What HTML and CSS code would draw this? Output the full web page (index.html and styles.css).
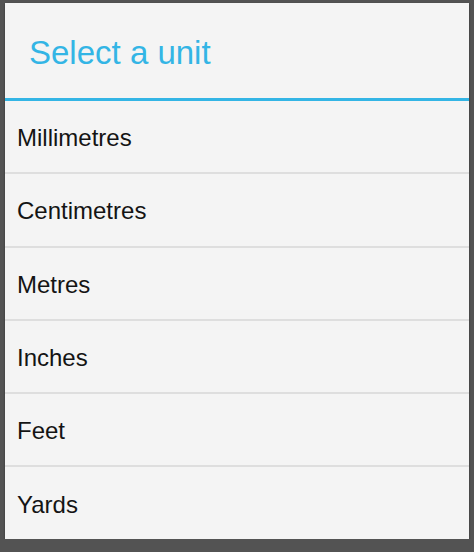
FILE: index.html
```html
<!DOCTYPE html>
<html>
<head>
    <link rel="stylesheet" href="styles.css">
</head>
<body>
    <div class="dialog">
        <div class="dialog-title">Select a unit</div>
        <ul class="unit-list">
            <li class="unit">Millimetres</li>
            <li class="unit">Centimetres</li>
            <li class="unit">Metres</li>
            <li class="unit">Inches</li>
            <li class="unit">Feet</li>
            <li class="unit">Yards</li>
        </ul>
    </div>
</body>
</html>
```

FILE: styles.css
```css
body {
    margin: 0;
    padding: 3px 5px 0 5px;
    background: #535353;
    font-family: "Liberation Sans", Arial, sans-serif;
    overflow: hidden;
}

.dialog {
    width: 464px;
    background: #f4f4f4;
    box-shadow: 0 1px 2px rgba(0, 0, 0, 0.4);
}

.dialog-title {
    height: 98px;
    box-sizing: border-box;
    padding: 33px 0 0 24px;
    font-size: 33px;
    line-height: 33px;
    color: #33b5e5;
    border-bottom: 3px solid #33b5e5;
}

.unit-list {
    list-style: none;
    margin: 0;
    padding: 0;
}

.unit {
    height: 73.3px;
    display: flex;
    align-items: center;
    padding: 3px 0 0 12px;
    font-size: 24px;
    color: #141414;
    border-bottom: 2px solid #dedede;
    box-sizing: border-box;
}

.unit:last-child {
    border-bottom: none;
    height: 72px;
}
```
